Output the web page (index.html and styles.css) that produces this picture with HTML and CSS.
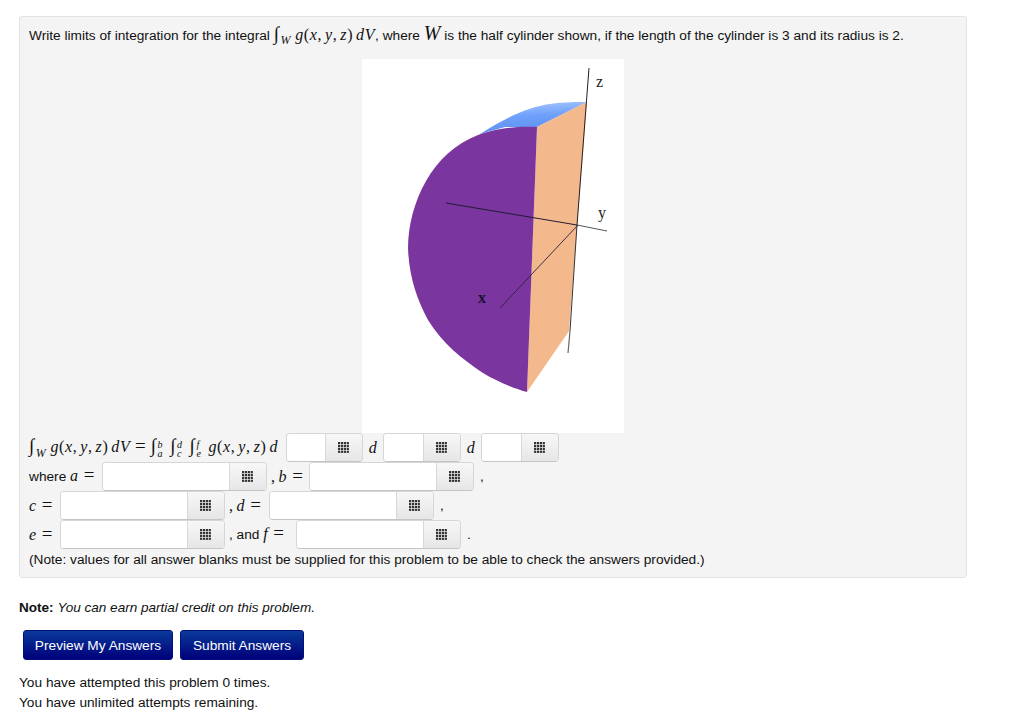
FILE: index.html
```html
<!DOCTYPE html>
<html lang="en">
<head>
<meta charset="utf-8">
<title>Problem</title>
<link rel="stylesheet" href="styles.css">
</head>
<body>
<svg class="defs" width="0" height="0" aria-hidden="true">
  <defs>
    <symbol id="grid" viewBox="0 0 11 11">
      <g fill="#333">
        <rect x="0" y="0" width="2.2" height="2.2"/><rect x="2.9" y="0" width="2.2" height="2.2"/><rect x="5.8" y="0" width="2.2" height="2.2"/><rect x="8.7" y="0" width="2.2" height="2.2"/>
        <rect x="0" y="2.9" width="2.2" height="2.2"/><rect x="2.9" y="2.9" width="2.2" height="2.2"/><rect x="5.8" y="2.9" width="2.2" height="2.2"/><rect x="8.7" y="2.9" width="2.2" height="2.2"/>
        <rect x="0" y="5.8" width="2.2" height="2.2"/><rect x="2.9" y="5.8" width="2.2" height="2.2"/><rect x="5.8" y="5.8" width="2.2" height="2.2"/><rect x="8.7" y="5.8" width="2.2" height="2.2"/>
        <rect x="0" y="8.7" width="2.2" height="2.2"/><rect x="2.9" y="8.7" width="2.2" height="2.2"/><rect x="5.8" y="8.7" width="2.2" height="2.2"/><rect x="8.7" y="8.7" width="2.2" height="2.2"/>
      </g>
    </symbol>
    <linearGradient id="top" x1="0" y1="0" x2="0.15" y2="1">
      <stop offset="0" stop-color="#a9c8ff"/>
      <stop offset="0.5" stop-color="#6d9ffb"/>
      <stop offset="1" stop-color="#5f90ee"/>
    </linearGradient>
  </defs>
</svg>

<main class="problem">
  <p class="question">Write limits of integration for the integral <span class="math"><span class="int">∫</span><sub>W</sub> g<span class="up">(</span>x<span class="up">, </span>y<span class="up">, </span>z<span class="up">)</span> dV</span>, where <span class="math big">W</span> is the half cylinder shown, if the length of the cylinder is 3 and its radius is 2.</p>

  <figure class="figure">
    <svg class="plot" viewBox="362 59 262 374" width="262" height="374" role="img" aria-label="Half cylinder with x, y and z axes">
      <path d="M480 134C505 118 528 107 550 104C565 102 577 102 587 102L537 127L505 127Z" fill="url(#top)"/>
      <path d="M537 127L587 102L569 331L527 392Z" fill="#f4b88d"/>
      <path d="M537 127C510 126 492 130 478 135C455 144 438 160 426 181C414 202 408 226 408 248C409 275 416 298 428 320C442 343 462 359 483 373C498 382 513 388 527 392Z" fill="#7b359e"/>
      <line x1="589" y1="68" x2="577" y2="225" stroke="#222" stroke-width="1"/>
      <line x1="577" y1="225" x2="570" y2="331" stroke="#333" stroke-width="1"/>
      <line x1="570" y1="331" x2="568" y2="353" stroke="#666" stroke-width="1.2"/>
      <line x1="446" y1="203" x2="577" y2="225" stroke="#221a33" stroke-width="1"/>
      <line x1="577" y1="225" x2="607" y2="231" stroke="#555" stroke-width="1"/>
      <line x1="578" y1="225" x2="500" y2="308" stroke="#2a2438" stroke-width="0.9"/>
      <text class="axis" x="596" y="87">z</text>
      <text class="axis" x="598" y="218">y</text>
      <text class="axis bold" x="478" y="303">x</text>
    </svg>
  </figure>

  <div class="row">
    <span class="math lbl-first"><span class="int">∫</span><sub>W</sub> g<span class="up">(</span>x<span class="up">, </span>y<span class="up">, </span>z<span class="up">)</span> dV <span class="up eq">=</span> <span class="int">∫</span><span class="lim"><sup>b</sup><sub>a</sub></span> <span class="int">∫</span><span class="lim"><sup>d</sup><sub>c</sub></span> <span class="int">∫</span><span class="lim"><sup>f</sup><sub>e</sub></span> g<span class="up">(</span>x<span class="up">, </span>y<span class="up">, </span>z<span class="up">)</span> d</span>
    <span class="group g-first"><input class="field" type="text" aria-label="first variable"><button class="grid-btn" type="button" aria-label="equation editor"><svg class="grid-icon"><use href="#grid"/></svg></button></span>
    <span class="math sep">d</span>
    <span class="group g-tiny"><input class="field" type="text" aria-label="second variable"><button class="grid-btn" type="button" aria-label="equation editor"><svg class="grid-icon"><use href="#grid"/></svg></button></span>
    <span class="math sep">d</span>
    <span class="group g-tiny"><input class="field" type="text" aria-label="third variable"><button class="grid-btn" type="button" aria-label="equation editor"><svg class="grid-icon"><use href="#grid"/></svg></button></span>
  </div>

  <div class="row">
    <span class="lbl-a">where <span class="math">a <span class="up eq">=</span></span></span>
    <span class="group g-wide"><input class="field" type="text" aria-label="a"><button class="grid-btn" type="button" aria-label="equation editor"><svg class="grid-icon"><use href="#grid"/></svg></button></span>
    <span class="math lead-b"><span class="up">, </span>b <span class="up eq">=</span></span>
    <span class="group g-wide"><input class="field" type="text" aria-label="b"><button class="grid-btn" type="button" aria-label="equation editor"><svg class="grid-icon"><use href="#grid"/></svg></button></span>
    <span class="after">,</span>
  </div>

  <div class="row">
    <span class="math lbl-c">c <span class="up eq">=</span></span>
    <span class="group g-wide"><input class="field" type="text" aria-label="c"><button class="grid-btn" type="button" aria-label="equation editor"><svg class="grid-icon"><use href="#grid"/></svg></button></span>
    <span class="math lead-d"><span class="up">, </span>d <span class="up eq">=</span></span>
    <span class="group g-wide"><input class="field" type="text" aria-label="d"><button class="grid-btn" type="button" aria-label="equation editor"><svg class="grid-icon"><use href="#grid"/></svg></button></span>
    <span class="after">,</span>
  </div>

  <div class="row">
    <span class="math lbl-c">e <span class="up eq">=</span></span>
    <span class="group g-wide"><input class="field" type="text" aria-label="e"><button class="grid-btn" type="button" aria-label="equation editor"><svg class="grid-icon"><use href="#grid"/></svg></button></span>
    <span class="lead-long">, and <span class="math">f <span class="up eq">=</span></span></span>
    <span class="group g-wide"><input class="field" type="text" aria-label="f"><button class="grid-btn" type="button" aria-label="equation editor"><svg class="grid-icon"><use href="#grid"/></svg></button></span>
    <span class="after">.</span>
  </div>

  <p class="hint">(Note: values for all answer blanks must be supplied for this problem to be able to check the answers provided.)</p>
</main>

<p class="credit"><strong>Note:</strong> <em>You can earn partial credit on this problem.</em></p>

<div class="actions">
  <button class="action preview" type="button">Preview My Answers</button>
  <button class="action submit" type="button">Submit Answers</button>
</div>

<p class="attempts">You have attempted this problem 0 times.<br>You have unlimited attempts remaining.</p>
</body>
</html>
```
FILE: styles.css
```css
* { box-sizing: border-box; }
html, body { margin: 0; padding: 0; }
body {
  background: #fff;
  color: #111;
  font-family: "Liberation Sans", Arial, sans-serif;
  font-size: 13.7px;
  line-height: 20px;
  height: 718px;
  overflow: hidden;
  padding: 16px 0 0 19px;
}
.defs { position: absolute; }
.problem {
  width: 948px;
  height: 562px;
  background: #f4f4f4;
  border: 1px solid #e3e3e3;
  border-radius: 3px;
  padding: 9px 9px 0;
}
.question { margin: 0; height: 33px; line-height: 20px; white-space: pre; }
.question .math { line-height: 0; }
.figure { margin: 0 0 0 333px; width: 262px; height: 374px; background: #fff; }
.plot { display: block; }
.axis { font-family: "Liberation Serif", serif; font-size: 16px; fill: #222; }
.bold { font-weight: bold; fill: #1b1030; }
.math {
  font-family: "Liberation Serif", "DejaVu Serif", serif;
  font-style: italic;
  font-size: 16px;
  letter-spacing: 0.6px;
  word-spacing: -1.6px;
  white-space: pre;
}
.up { font-style: normal; }
.eq { font-size: 19px; line-height: 0; letter-spacing: 0; margin: 0 2px; }
.math.big { font-size: 20px; letter-spacing: 0; }
.int { font-size: 19px; line-height: 0; }
.math sub, .math sup { font-size: 12px; line-height: 0; margin: 0 1px; }
.lim { display: inline-flex; flex-direction: column; vertical-align: middle; margin: 0 4px 0 1px; }
.math .lim sup, .math .lim sub { font-size: 10px; line-height: 9px; vertical-align: baseline; margin: 0; }
.row { display: flex; align-items: center; height: 29px; white-space: pre; }
.lbl-first { width: 257px; flex: none; }
.lbl-a { width: 73px; flex: none; }
.lbl-c { width: 31px; flex: none; }
.group {
  display: flex;
  height: 29px;
  border: 1px solid #d6d6d6;
  border-bottom-color: #c4c4c4;
  border-radius: 4px;
  background: #fff;
  overflow: hidden;
  flex: none;
}
.g-first { width: 77px; }
.g-tiny { width: 78px; }
.g-wide { width: 165px; }
.sep { width: 20px; flex: none; text-align: center; }
.lead-b { width: 42px; flex: none; padding-left: 4px; }
.lead-d { width: 44px; flex: none; padding-left: 4px; }
.lead-long { width: 71px; flex: none; padding-left: 4px; }
.after { margin-left: 6px; }
.field {
  flex: 1;
  min-width: 0;
  border: 0;
  background: #fff;
  padding: 0;
  outline: 0;
}
.grid-btn {
  flex: none;
  width: 37px;
  border: 0;
  border-left: 1px solid #d8d8d8;
  background: linear-gradient(#f7f7f7, #e6e6e6);
  padding: 0 2px 0 0;
  display: flex;
  align-items: center;
  justify-content: center;
}
.grid-icon { width: 11px; height: 11px; display: block; }
.hint { margin: 1px 0 0; height: 20px; line-height: 20px; }
.credit { margin: 20px 0 0; height: 20px; line-height: 20px; font-size: 13.55px; }
.actions { display: flex; gap: 7px; margin: 12px 0 0 4px; }
.action {
  height: 30px;
  padding: 1px 0 0;
  border: 1px solid #02107a;
  border-radius: 3px;
  background: linear-gradient(#0a3a9a, #00007a);
  color: #fff;
  font: 13.7px/20px "Liberation Sans", Arial, sans-serif;
}
.preview { width: 150px; }
.submit { width: 124px; }
.attempts { margin: 13px 0 0; line-height: 20px; }
```
